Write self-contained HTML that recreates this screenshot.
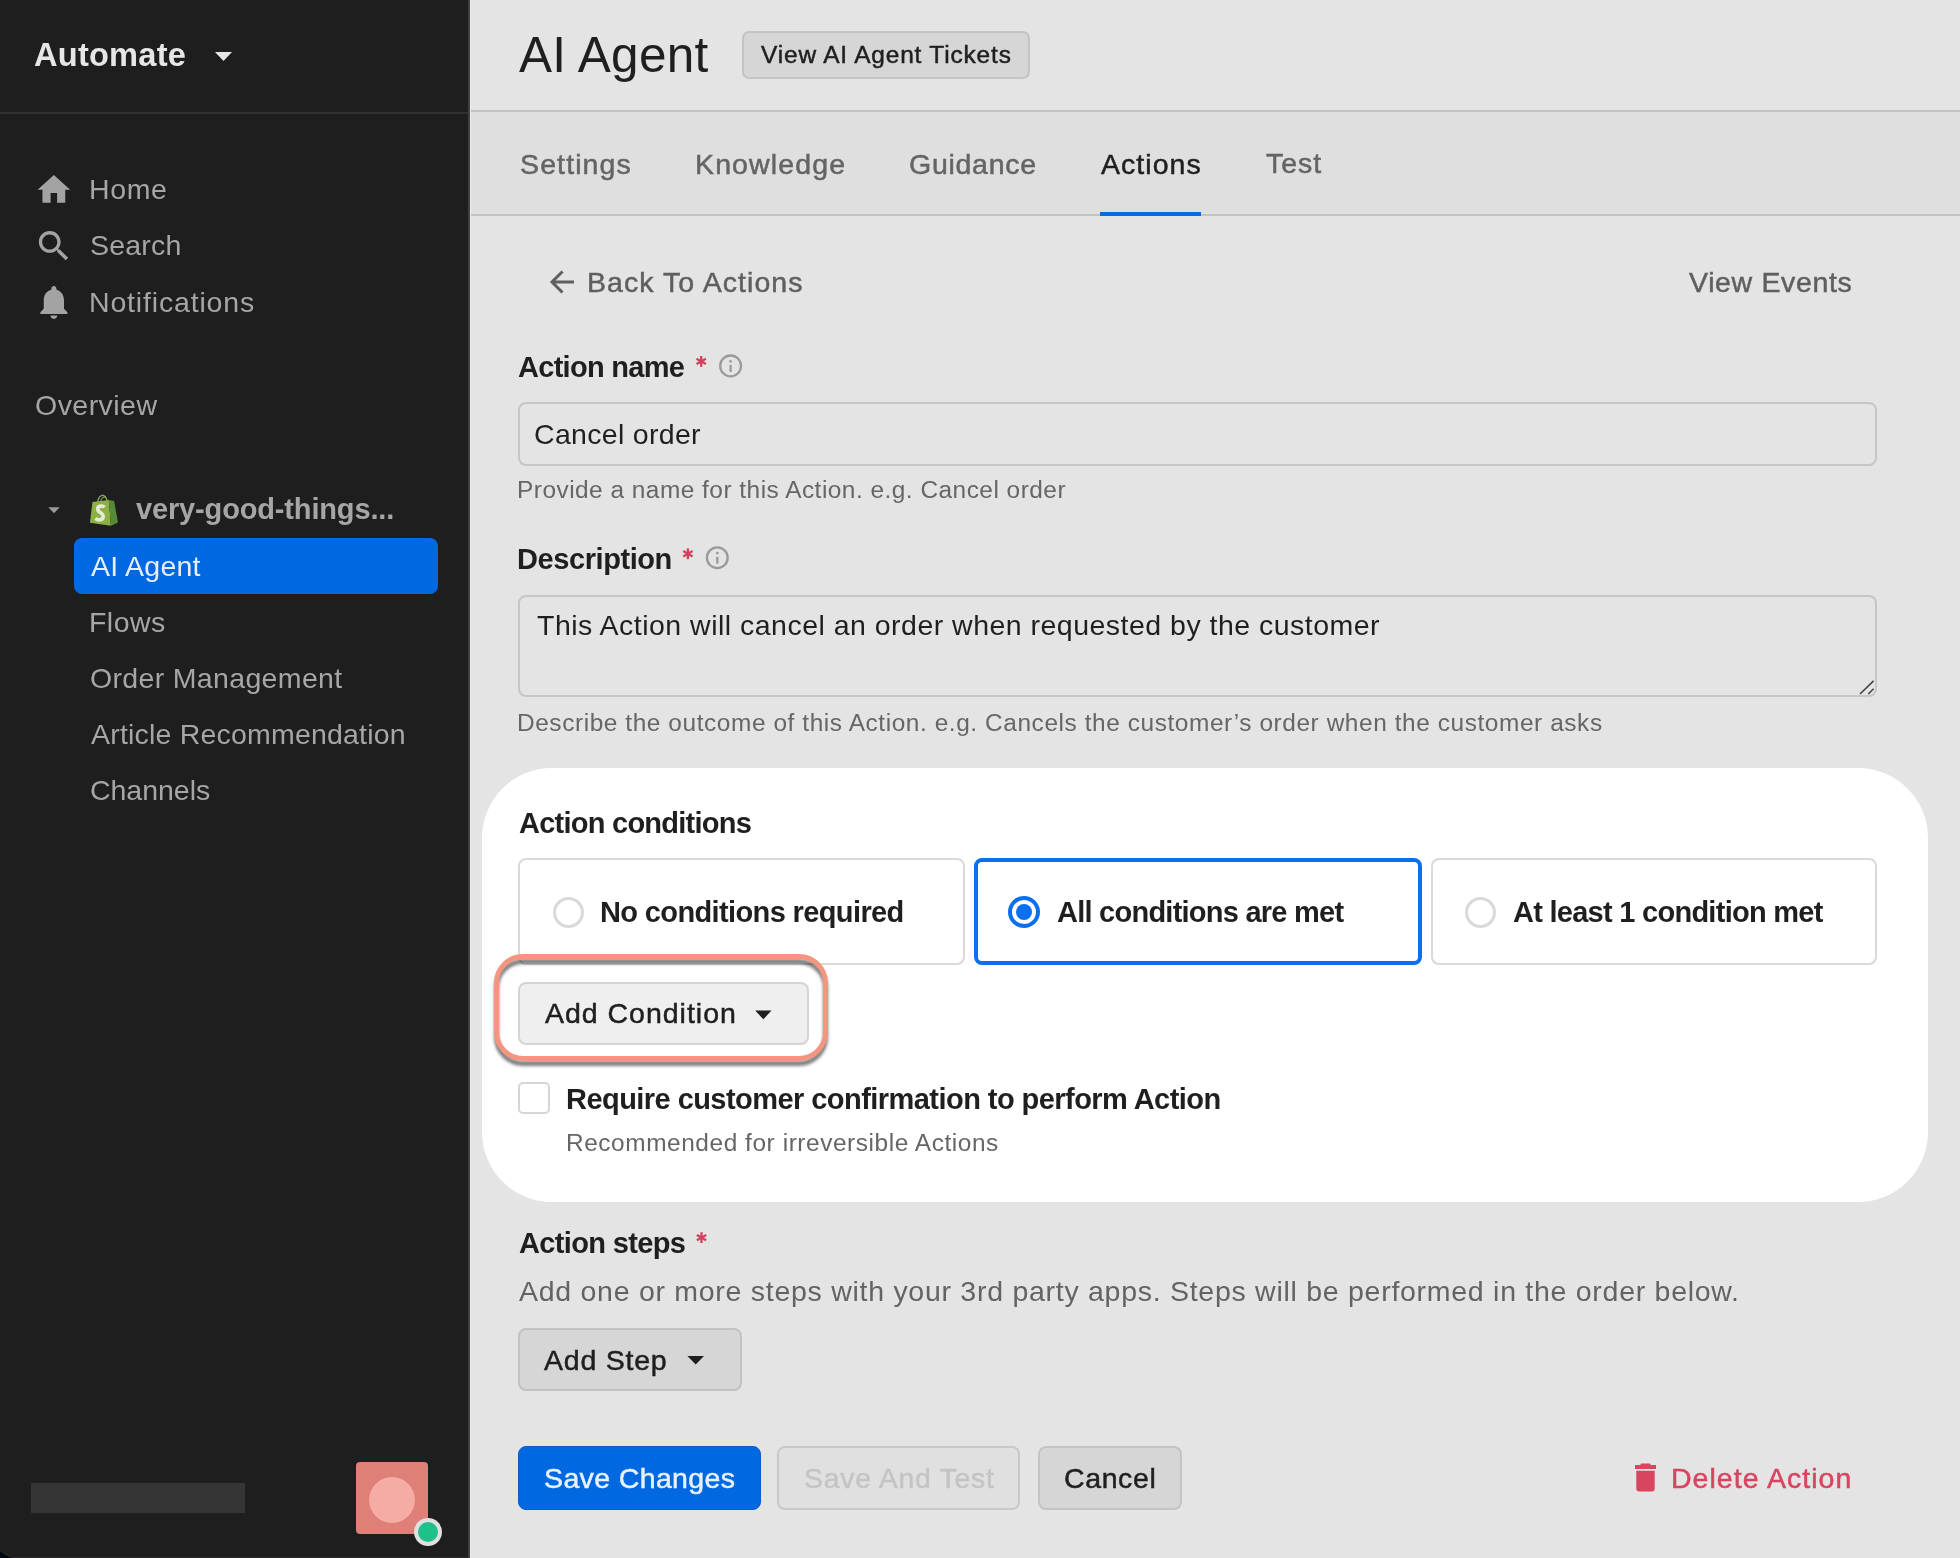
<!DOCTYPE html>
<html><head><meta charset="utf-8"><title>AI Agent - Actions</title>
<style>
html,body{margin:0;padding:0;}
body{width:1960px;height:1558px;position:relative;overflow:hidden;background:#e4e4e4;font-family:"Liberation Sans", sans-serif;}
.t{position:absolute;line-height:1;white-space:nowrap;will-change:transform;}
.r{position:absolute;}
svg.r{overflow:visible;}
</style></head><body>
<div class="r" style="left:0px;top:0px;width:468px;height:1558px;background:#1e1e1e"></div>
<div class="r" style="left:468px;top:0px;width:2px;height:1558px;background:#404040"></div>
<div class="r" style="left:470px;top:0px;width:1490px;height:1558px;background:#e4e4e4"></div>
<div class="r" style="left:470px;top:0px;width:1px;height:1558px;background:#ececec"></div>
<div class="r" style="left:0px;top:1557px;width:468px;height:1px;background:#2c2c2c"></div>
<svg class="r" style="left:0;top:1540px" width="20" height="18" viewBox="0 1540 20 18"><path d="M0 1550.5 Q6 1555.5 13 1558 L0 1558 Z" fill="#02060e"/><path d="M0 1550.5 Q6 1555.5 13 1558" stroke="#2a2d31" stroke-width="1" fill="none"/></svg>
<div class="r" style="left:0px;top:112px;width:468px;height:2px;background:#313131"></div>
<div class="r" style="left:471px;top:110px;width:1489px;height:2px;background:#c2c2c2"></div>
<div class="r" style="left:471px;top:112px;width:1489px;height:102px;background:#dfdfdf"></div>
<div class="r" style="left:471px;top:214px;width:1489px;height:2px;background:#c4c4c4"></div>
<div class="t" style="left:33.90px;top:39.21px;font-size:32.58px;font-weight:700;color:#e6e6e6;letter-spacing:0.231px;">Automate</div>
<svg class="r" style="left:0;top:0" width="468" height="1558" viewBox="0 0 468 1558"><polygon points="215,52 232,52 223.5,61" fill="#e6e6e6"/><g transform="translate(34.3,170.1) scale(1.63)" fill="#a3a3a3"><path d="M10 20v-6h4v6h5v-8h3L12 3 2 12h3v8z"/></g><g transform="translate(33.8,226) scale(1.677)" fill="#a3a3a3"><path d="M15.5 14h-.79l-.28-.27C15.41 12.59 16 11.11 16 9.5 16 5.91 13.09 3 9.5 3S3 5.91 3 9.5 5.91 16 9.5 16c1.61 0 3.09-.59 4.23-1.57l.27.28v.79l5 4.99L20.49 19l-4.99-5zm-6 0C7.01 14 5 11.99 5 9.5S7.01 5 9.5 5 14 7.01 14 9.5 11.99 14 9.5 14z"/></g><g transform="translate(33.6,281.8) scale(1.69)" fill="#a3a3a3"><path d="M12 22c1.1 0 2-.9 2-2h-4c0 1.1.89 2 2 2zm6-6v-5c0-3.07-1.64-5.64-4.5-6.32V4c0-.83-.67-1.5-1.5-1.5s-1.5.67-1.5 1.5v.68C7.63 5.36 6 7.92 6 11v5l-2 2v1h16v-1l-2-2z"/></g><polygon points="48.3,507.3 59.7,507.3 54,513.2" fill="#9a9a9a"/><g transform="translate(89.9,493.9)"><path d="M7.6 8.6 C8.2 3.6 10.8 1.0 13.4 1.6 C15.4 2.1 16.6 4.6 17.2 6.8" stroke="#8aab5c" stroke-width="1.3" fill="none"/><path d="M10.6 8.0 C11.4 4.8 13.2 3.0 15.0 3.4" stroke="#7f9f55" stroke-width="1.1" fill="none"/><path d="M2.6 8.2 L19 6.0 L21 31.8 L0 28.8 Z" fill="#8bb043"/><path d="M19 6.0 L24.2 7.2 L28.1 28.6 L21 31.8 Z" fill="#578a37"/><path d="M14.6 13.4 C13.0 11.6 7.8 11.4 7.8 15.3 C7.8 18.8 13.4 18.4 13.3 22.5 C13.2 26.4 8.6 26.8 5.4 24.6" stroke="#e6ead6" stroke-width="3.6" fill="none"/></g></svg>
<div class="t" style="left:89.40px;top:175.47px;font-size:28.5px;font-weight:400;color:#a6a6a6;letter-spacing:0.600px;">Home</div>
<div class="t" style="left:90.20px;top:231.47px;font-size:28.5px;font-weight:400;color:#a6a6a6;letter-spacing:0.200px;">Search</div>
<div class="t" style="left:89.20px;top:288.27px;font-size:28.5px;font-weight:400;color:#a6a6a6;letter-spacing:0.830px;">Notifications</div>
<div class="t" style="left:34.80px;top:391.47px;font-size:28.5px;font-weight:400;color:#a6a6a6;letter-spacing:0.457px;">Overview</div>
<div class="t" style="left:135.50px;top:495.05px;font-size:29px;font-weight:700;color:#a6a6a6;letter-spacing:-0.152px;">very-good-things...</div>
<div class="r" style="left:74px;top:538px;width:364px;height:56px;background:#0068e0;border-radius:8px"></div>
<div class="t" style="left:91.00px;top:551.87px;font-size:28.5px;font-weight:400;color:#e8eef8;letter-spacing:0.254px;">AI Agent</div>
<div class="t" style="left:89.10px;top:607.72px;font-size:28.5px;font-weight:400;color:#a6a6a6;letter-spacing:0.445px;">Flows</div>
<div class="t" style="left:90.10px;top:664.22px;font-size:28.5px;font-weight:400;color:#a6a6a6;letter-spacing:0.337px;">Order Management</div>
<div class="t" style="left:91.30px;top:720.12px;font-size:28.5px;font-weight:400;color:#a6a6a6;letter-spacing:0.200px;width:315px;overflow:hidden;white-space:nowrap">Article Recommendations</div>
<div class="t" style="left:90.10px;top:775.92px;font-size:28.5px;font-weight:400;color:#a6a6a6;letter-spacing:-0.033px;">Channels</div>
<div class="r" style="left:31px;top:1483px;width:214px;height:30px;background:#353535"></div>
<div class="r" style="left:356px;top:1462px;width:72px;height:72px;background:#de7f78;border-radius:4px"></div>
<div class="r" style="left:369px;top:1477px;width:46px;height:46px;background:#f4aca5;border-radius:50%"></div>
<div class="r" style="left:414px;top:1518px;width:28px;height:28px;background:#e0e0e0;border-radius:50%"></div>
<div class="r" style="left:418px;top:1522px;width:20px;height:20px;background:#20c08a;border-radius:50%"></div>
<div class="t" style="left:519.00px;top:30.34px;font-size:49.5px;font-weight:400;color:#1f1f1f;letter-spacing:0.316px;">AI Agent</div>
<div class="r" style="left:742px;top:31px;width:288px;height:48px;box-sizing:border-box;background:#d6d6d6;border:2px solid #c4c4c4;border-radius:7px"></div>
<div class="t" style="left:761.00px;top:43.12px;font-size:24.43px;font-weight:400;color:#1f1f1f;letter-spacing:0.840px;-webkit-text-stroke:0.5px #1f1f1f;">View AI Agent Tickets</div>
<div class="t" style="left:519.70px;top:149.97px;font-size:28.5px;font-weight:400;color:#646464;letter-spacing:1.116px;-webkit-text-stroke:0.5px #646464;">Settings</div>
<div class="t" style="left:694.50px;top:149.97px;font-size:28.5px;font-weight:400;color:#646464;letter-spacing:1.130px;-webkit-text-stroke:0.5px #646464;">Knowledge</div>
<div class="t" style="left:908.50px;top:149.97px;font-size:28.5px;font-weight:400;color:#646464;letter-spacing:0.723px;-webkit-text-stroke:0.5px #646464;">Guidance</div>
<div class="t" style="left:1100.90px;top:149.97px;font-size:28.5px;font-weight:400;color:#1f1f1f;letter-spacing:1.030px;-webkit-text-stroke:0.5px #1f1f1f;">Actions</div>
<div class="t" style="left:1266.00px;top:149.47px;font-size:28.5px;font-weight:400;color:#646464;letter-spacing:1.000px;-webkit-text-stroke:0.5px #646464;">Test</div>
<div class="r" style="left:1100px;top:212px;width:101px;height:4px;background:#0a6be0"></div>
<svg class="r" style="left:540px;top:262px" width="44" height="40" viewBox="540 262 44 40"><path d="M574 282 H552 M562.5 271.5 L552 282 L562.5 292.5" stroke="#5f5f5f" stroke-width="3" fill="none"/></svg>
<div class="t" style="left:587.40px;top:268.32px;font-size:28.5px;font-weight:400;color:#5f5f5f;letter-spacing:1.056px;-webkit-text-stroke:0.5px #5f5f5f;">Back To Actions</div>
<div class="t" style="left:1688.80px;top:268.07px;font-size:28.5px;font-weight:400;color:#5f5f5f;letter-spacing:0.640px;-webkit-text-stroke:0.5px #5f5f5f;">View Events</div>
<div class="t" style="left:518.40px;top:352.85px;font-size:29px;font-weight:700;color:#1f1f1f;letter-spacing:-0.720px;">Action name</div>
<svg class="r" style="left:0;top:0" width="1960" height="1558" viewBox="0 0 1960 1558"><line x1="701.20" y1="356.00" x2="701.20" y2="366.80" stroke="#d2405b" stroke-width="2.3"/><line x1="705.88" y1="358.70" x2="696.52" y2="364.10" stroke="#d2405b" stroke-width="2.3"/><line x1="705.88" y1="364.10" x2="696.52" y2="358.70" stroke="#d2405b" stroke-width="2.3"/><circle cx="730.6" cy="365.9" r="10.4" stroke="#9a9a9a" stroke-width="2.3" fill="none"/><circle cx="730.6" cy="361.29999999999995" r="1.4" fill="#9a9a9a"/><rect x="729.45" y="364.9" width="2.3" height="7" fill="#9a9a9a"/><line x1="687.90" y1="548.40" x2="687.90" y2="559.20" stroke="#d2405b" stroke-width="2.3"/><line x1="692.58" y1="551.10" x2="683.22" y2="556.50" stroke="#d2405b" stroke-width="2.3"/><line x1="692.58" y1="556.50" x2="683.22" y2="551.10" stroke="#d2405b" stroke-width="2.3"/><circle cx="717.3" cy="557.7" r="10.4" stroke="#9a9a9a" stroke-width="2.3" fill="none"/><circle cx="717.3" cy="553.1" r="1.4" fill="#9a9a9a"/><rect x="716.15" y="556.7" width="2.3" height="7" fill="#9a9a9a"/><line x1="701.50" y1="1232.20" x2="701.50" y2="1243.00" stroke="#d2405b" stroke-width="2.3"/><line x1="706.18" y1="1234.90" x2="696.82" y2="1240.30" stroke="#d2405b" stroke-width="2.3"/><line x1="706.18" y1="1240.30" x2="696.82" y2="1234.90" stroke="#d2405b" stroke-width="2.3"/></svg>
<div class="r" style="left:518px;top:402px;width:1359px;height:64px;box-sizing:border-box;border:2px solid #c6c6c6;border-radius:8px"></div>
<div class="t" style="left:534.10px;top:419.62px;font-size:28.5px;font-weight:400;color:#1f1f1f;letter-spacing:0.308px;">Cancel order</div>
<div class="t" style="left:516.90px;top:478.02px;font-size:24.43px;font-weight:400;color:#666666;letter-spacing:0.483px;">Provide a name for this Action. e.g. Cancel order</div>
<div class="t" style="left:517.20px;top:544.85px;font-size:29px;font-weight:700;color:#1f1f1f;letter-spacing:-0.420px;">Description</div>
<div class="r" style="left:518px;top:595px;width:1359px;height:102px;box-sizing:border-box;border:2px solid #c6c6c6;border-radius:8px"></div>
<div class="t" style="left:537.40px;top:611.27px;font-size:28.5px;font-weight:400;color:#1f1f1f;letter-spacing:0.482px;">This Action will cancel an order when requested by the customer</div>
<svg class="r" style="left:1850px;top:675px" width="30" height="25" viewBox="1850 675 30 25"><path d="M1860 694 L1873.6 680.9 M1868.3 694 L1873.6 688.7" stroke="#444" stroke-width="1.6"/></svg>
<div class="t" style="left:516.90px;top:711.07px;font-size:24.43px;font-weight:400;color:#666666;letter-spacing:0.576px;">Describe the outcome of this Action. e.g. Cancels the customer’s order when the customer asks</div>
<div class="r" style="left:482px;top:768px;width:1446px;height:434px;background:#ffffff;border-radius:70px"></div>
<div class="t" style="left:518.60px;top:809.25px;font-size:29px;font-weight:700;color:#1f1f1f;letter-spacing:-0.750px;">Action conditions</div>
<div class="r" style="left:518px;top:858px;width:447px;height:107px;box-sizing:border-box;border:2px solid #d9d9d9;border-radius:8px"></div>
<div class="r" style="left:974px;top:858px;width:448px;height:107px;box-sizing:border-box;border:4px solid #0b6ff0;border-radius:8px"></div>
<div class="r" style="left:1431px;top:858px;width:446px;height:107px;box-sizing:border-box;border:2px solid #d9d9d9;border-radius:8px"></div>
<div class="r" style="left:552.5px;top:896.5px;width:31px;height:31px;box-sizing:border-box;border:3px solid #d9d9d9;border-radius:50%"></div>
<div class="r" style="left:1008px;top:896px;width:32px;height:32px;box-sizing:border-box;border:4px solid #0b6ff0;border-radius:50%"></div>
<div class="r" style="left:1016px;top:904px;width:16px;height:16px;background:#0b6ff0;border-radius:50%"></div>
<div class="r" style="left:1464.5px;top:896.5px;width:31px;height:31px;box-sizing:border-box;border:3px solid #d9d9d9;border-radius:50%"></div>
<div class="t" style="left:599.50px;top:898.45px;font-size:29px;font-weight:700;color:#1f1f1f;letter-spacing:-0.626px;">No conditions required</div>
<div class="t" style="left:1056.60px;top:898.45px;font-size:29px;font-weight:700;color:#1f1f1f;letter-spacing:-0.756px;">All conditions are met</div>
<div class="t" style="left:1513.00px;top:898.45px;font-size:29px;font-weight:700;color:#1f1f1f;letter-spacing:-0.727px;">At least 1 condition met</div>
<div class="r" style="left:518px;top:982px;width:291px;height:63px;box-sizing:border-box;background:#efefef;border:2px solid #d4d4d4;border-radius:8px"></div>
<div class="t" style="left:544.60px;top:999.32px;font-size:28.5px;font-weight:400;color:#1f1f1f;letter-spacing:0.982px;-webkit-text-stroke:0.5px #1f1f1f;">Add Condition</div>
<svg class="r" style="left:0;top:0" width="1960" height="1558" viewBox="0 0 1960 1558"><polygon points="755.2,1010.6 771.5,1010.6 763.35,1019.3" fill="#1f1f1f"/><polygon points="687.4,1356 704,1356 695.7,1364.6" fill="#1f1f1f"/></svg>
<div class="r" style="left:494px;top:954px;width:334px;height:107px;box-sizing:border-box;border:5.5px solid #f6957f;border-radius:29px;filter:drop-shadow(0 5px 1.5px rgba(0,0,0,0.5))"></div>
<div class="r" style="left:518px;top:1082px;width:32px;height:32px;box-sizing:border-box;border:2px solid #d6d6d6;border-radius:5px"></div>
<div class="t" style="left:565.50px;top:1084.85px;font-size:29px;font-weight:700;color:#1f1f1f;letter-spacing:-0.550px;">Require customer confirmation to perform Action</div>
<div class="t" style="left:565.50px;top:1130.62px;font-size:24.43px;font-weight:400;color:#666666;letter-spacing:0.560px;">Recommended for irreversible Actions</div>
<div class="t" style="left:518.80px;top:1228.65px;font-size:29px;font-weight:700;color:#1f1f1f;letter-spacing:-0.640px;">Action steps</div>
<div class="t" style="left:518.60px;top:1276.72px;font-size:28.5px;font-weight:400;color:#636363;letter-spacing:0.724px;">Add one or more steps with your 3rd party apps. Steps will be performed in the order below.</div>
<div class="r" style="left:518px;top:1328px;width:224px;height:63px;box-sizing:border-box;background:#d6d6d6;border:2px solid #c2c2c2;border-radius:8px"></div>
<div class="t" style="left:544.40px;top:1345.72px;font-size:28.5px;font-weight:400;color:#1f1f1f;letter-spacing:0.773px;-webkit-text-stroke:0.5px #1f1f1f;">Add Step</div>
<svg class="r" style="left:680px;top:1350px" width="30" height="20" viewBox="680 1350 30 20"><polygon points="687.4,1356 704,1356 695.7,1364.6" fill="#1f1f1f"/></svg>
<div class="r" style="left:518px;top:1446px;width:243px;height:64px;box-sizing:border-box;background:#0068e0;border:1.5px solid #0c5ec6;border-radius:8px"></div>
<div class="t" style="left:544.10px;top:1463.87px;font-size:28.5px;font-weight:400;color:#e8f2fe;letter-spacing:0.368px;-webkit-text-stroke:0.5px #e8f2fe;">Save Changes</div>
<div class="r" style="left:777px;top:1446px;width:243px;height:64px;box-sizing:border-box;background:#e0e0e0;border:2px solid #c8c8c8;border-radius:8px"></div>
<div class="t" style="left:803.70px;top:1463.87px;font-size:28.5px;font-weight:400;color:#c4c4c4;letter-spacing:0.685px;-webkit-text-stroke:0.5px #c4c4c4;">Save And Test</div>
<div class="r" style="left:1038px;top:1446px;width:144px;height:64px;box-sizing:border-box;background:#d6d6d6;border:2px solid #c4c4c4;border-radius:8px"></div>
<div class="t" style="left:1064.00px;top:1463.87px;font-size:28.5px;font-weight:400;color:#1f1f1f;letter-spacing:0.600px;-webkit-text-stroke:0.5px #1f1f1f;">Cancel</div>
<svg class="r" style="left:1630px;top:1458px" width="30" height="38" viewBox="1630 1458 30 38"><rect x="1640.5" y="1463.6" width="10" height="3" rx="1" fill="#d9445e"/><rect x="1635" y="1465" width="21" height="4" fill="#d9445e"/><path d="M1636.3 1470.7 H1654.7 V1488.5 Q1654.7 1491.5 1651.7 1491.5 H1639.3 Q1636.3 1491.5 1636.3 1488.5 Z" fill="#d9445e"/></svg>
<div class="t" style="left:1671.10px;top:1464.27px;font-size:28.5px;font-weight:400;color:#d9445e;letter-spacing:1.032px;-webkit-text-stroke:0.5px #d9445e;">Delete Action</div>
</body></html>
